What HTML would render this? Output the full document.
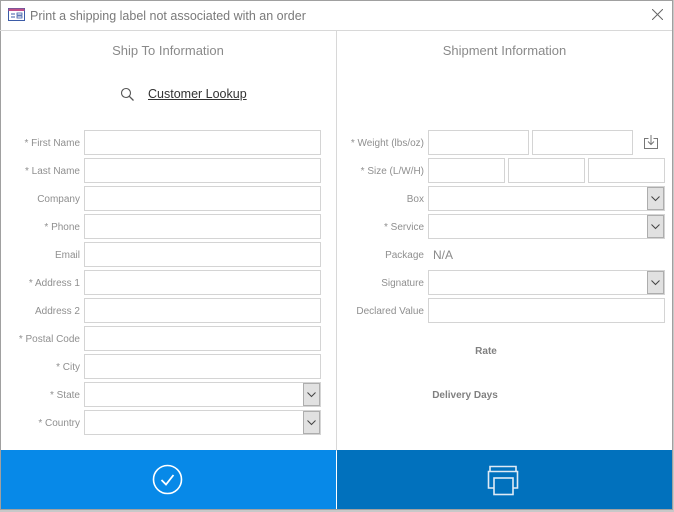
<!DOCTYPE html>
<html><head><style>
*{margin:0;padding:0;box-sizing:border-box}
body{width:674px;height:512px;background:#c8c8c8;position:relative;overflow:hidden;font-family:"Liberation Sans",sans-serif}
#dlg{position:absolute;left:0;top:0;width:673px;height:510px;background:#fff;box-shadow:inset 0 0 0 1px #a0a0a0}
.a{position:absolute}
.lbl{position:absolute;font-size:10px;color:#8f8f8f;text-align:right;line-height:25px;height:25px;margin-top:1px}
.in{position:absolute;height:25px;border:1px solid #d4d4d4;background:#fff}
.dd{position:absolute;right:0;top:0;width:17px;height:23px;background:#e1e1e1;border:1px solid #adadad}
.dd svg{position:absolute;left:3px;top:8px}
</style></head><body>
<div id="dlg">
<svg class="a" style="left:8px;top:8px" width="17" height="13" viewBox="0 0 17 13"><rect x="0.5" y="0.5" width="16" height="12" fill="#fff" stroke="#3b5ba7"/><rect x="0.5" y="0.5" width="16" height="2.5" fill="#c0508a"/><path d="M3 6h4M3 9h4" stroke="#3b5ba7"/><rect x="9" y="5" width="5" height="2" fill="none" stroke="#3b5ba7" stroke-width=".8"/><rect x="9" y="8" width="5" height="2" fill="none" stroke="#3b5ba7" stroke-width=".8"/></svg>
<div class="a" style="left:30px;top:9px;font-size:12.5px;color:#7a7a7a">Print a shipping label not associated with an order</div>
<svg class="a" style="left:652px;top:9px" width="11" height="11"><path d="M0 0L11 11M11 0L0 11" stroke="#666" stroke-width="1"/></svg>
<div class="a" style="left:0;top:30px;width:672px;height:1px;background:#d8d8d8"></div>
<div class="a" style="left:336px;top:31px;width:1px;height:420px;background:#d8d8d8"></div>

<div class="a" style="left:0;top:43px;width:336px;text-align:center;font-size:13px;color:#8a8a8a">Ship To Information</div>
<div class="a" style="left:337px;top:43px;width:335px;text-align:center;font-size:13px;color:#8a8a8a">Shipment Information</div>

<svg class="a" style="left:120px;top:87px" width="15" height="15"><circle cx="6" cy="6" r="4.5" fill="none" stroke="#555" stroke-width="1.1"/><path d="M9.3 9.3L13.5 13.5" stroke="#555" stroke-width="1.3"/></svg>
<div class="a" style="left:148px;top:87px;font-size:12.5px;color:#333;text-decoration:underline">Customer Lookup</div>

<div class="lbl" style="left:0;width:80px;top:130px">* First Name</div><div class="in" style="left:84px;top:130px;width:237px"></div>
<div class="lbl" style="left:0;width:80px;top:158px">* Last Name</div><div class="in" style="left:84px;top:158px;width:237px"></div>
<div class="lbl" style="left:0;width:80px;top:186px">Company</div><div class="in" style="left:84px;top:186px;width:237px"></div>
<div class="lbl" style="left:0;width:80px;top:214px">* Phone</div><div class="in" style="left:84px;top:214px;width:237px"></div>
<div class="lbl" style="left:0;width:80px;top:242px">Email</div><div class="in" style="left:84px;top:242px;width:237px"></div>
<div class="lbl" style="left:0;width:80px;top:270px">* Address 1</div><div class="in" style="left:84px;top:270px;width:237px"></div>
<div class="lbl" style="left:0;width:80px;top:298px">Address 2</div><div class="in" style="left:84px;top:298px;width:237px"></div>
<div class="lbl" style="left:0;width:80px;top:326px">* Postal Code</div><div class="in" style="left:84px;top:326px;width:237px"></div>
<div class="lbl" style="left:0;width:80px;top:354px">* City</div><div class="in" style="left:84px;top:354px;width:237px"></div>
<div class="lbl" style="left:0;width:80px;top:382px">* State</div><div class="in" style="left:84px;top:382px;width:237px"><div class="dd"><svg width="9" height="6"><path d="M0.5 0.5L4.5 4.5L8.5 0.5" fill="none" stroke="#444"/></svg></div></div>
<div class="lbl" style="left:0;width:80px;top:410px">* Country</div><div class="in" style="left:84px;top:410px;width:237px"><div class="dd"><svg width="9" height="6"><path d="M0.5 0.5L4.5 4.5L8.5 0.5" fill="none" stroke="#444"/></svg></div></div>

<div class="lbl" style="left:336px;width:88px;top:130px">* Weight (lbs/oz)</div>
<div class="in" style="left:428px;top:130px;width:101px"></div><div class="in" style="left:532px;top:130px;width:101px"></div>
<svg class="a" style="left:644px;top:135px" width="14" height="14"><path d="M4.5 3.5H0.5V13.5H13.5V3.5H9.5" fill="none" stroke="#777"/><path d="M7 0V9M4 6.5L7 9.5L10 6.5" fill="none" stroke="#777"/></svg>
<div class="lbl" style="left:336px;width:88px;top:158px">* Size (L/W/H)</div>
<div class="in" style="left:428px;top:158px;width:77px"></div><div class="in" style="left:508px;top:158px;width:77px"></div><div class="in" style="left:588px;top:158px;width:77px"></div>
<div class="lbl" style="left:336px;width:88px;top:186px">Box</div><div class="in" style="left:428px;top:186px;width:237px"><div class="dd"><svg width="9" height="6"><path d="M0.5 0.5L4.5 4.5L8.5 0.5" fill="none" stroke="#444"/></svg></div></div>
<div class="lbl" style="left:336px;width:88px;top:214px">* Service</div><div class="in" style="left:428px;top:214px;width:237px"><div class="dd"><svg width="9" height="6"><path d="M0.5 0.5L4.5 4.5L8.5 0.5" fill="none" stroke="#444"/></svg></div></div>
<div class="lbl" style="left:336px;width:88px;top:242px">Package</div>
<div class="a" style="left:433px;top:248px;font-size:12px;color:#8a8a8a">N/A</div>
<div class="lbl" style="left:336px;width:88px;top:270px">Signature</div><div class="in" style="left:428px;top:270px;width:237px"><div class="dd"><svg width="9" height="6"><path d="M0.5 0.5L4.5 4.5L8.5 0.5" fill="none" stroke="#444"/></svg></div></div>
<div class="lbl" style="left:336px;width:88px;top:298px">Declared Value</div><div class="in" style="left:428px;top:298px;width:237px"></div>
<div class="a" style="left:436px;top:346px;width:100px;text-align:center;font-size:10px;font-weight:bold;color:#808080">Rate</div>
<div class="a" style="left:415px;top:390px;width:100px;text-align:center;font-size:10px;font-weight:bold;color:#808080">Delivery Days</div>

<div class="a" style="left:1px;top:450px;width:335px;height:59px;background:#0789e8"></div>
<div class="a" style="left:337px;top:450px;width:335px;height:59px;background:#0171bd"></div>
<svg class="a" style="left:152px;top:464px" width="31" height="31"><circle cx="15.5" cy="15.5" r="14" fill="none" stroke="#fff" stroke-width="1.6"/><path d="M9.5 16L14 20.5L21.5 11" fill="none" stroke="#fff" stroke-width="1.8"/></svg>
<svg class="a" style="left:486px;top:464px" width="36" height="32"><path d="M4 7.5V2.5H30V7.5" fill="none" stroke="#dfeaf5" stroke-width="1.6"/><path d="M8 24H2.5V7.5H31.5V24H27" fill="none" stroke="#dfeaf5" stroke-width="1.6"/><rect x="8" y="14" width="19" height="16.5" fill="none" stroke="#dfeaf5" stroke-width="1.6"/></svg>
</div>
</body></html>
